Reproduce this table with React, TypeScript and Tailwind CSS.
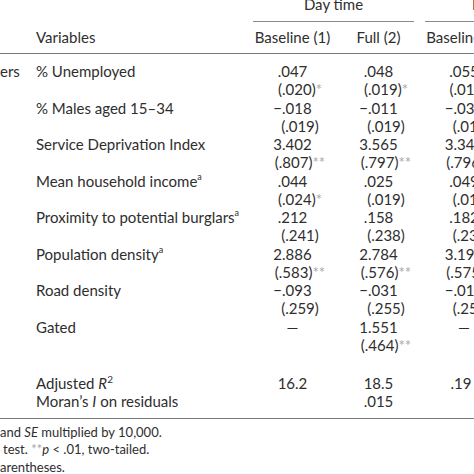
import React from "react";

type Cell = { c: string; se?: string; st?: string };
type Row = { label: React.ReactNode; a: Cell; b: Cell; cc: Cell; left?: string };

const rows: Row[] = [
  { left: "ers", label: "% Unemployed", a: { c: ".047", se: "(.020)", st: "*" }, b: { c: ".048", se: "(.019)", st: "*" }, cc: { c: ".055", se: "(.019)", st: "*" } },
  { label: "% Males aged 15–34", a: { c: "−.018", se: "(.019)" }, b: { c: "−.011", se: "(.019)" }, cc: { c: "−.036", se: "(.019)" } },
  { label: "Service Deprivation Index", a: { c: "3.402", se: "(.807)", st: "**" }, b: { c: "3.565", se: "(.797)", st: "**" }, cc: { c: "3.346", se: "(.796)", st: "**" } },
  { label: <>Mean household income<sup className="text-[9px] top-[-7px]">a</sup></>, a: { c: ".044", se: "(.024)", st: "*" }, b: { c: ".025", se: "(.019)" }, cc: { c: ".049", se: "(.019)" } },
  { label: <>Proximity to potential burglars<sup className="text-[9px] top-[-7px]">a</sup></>, a: { c: ".212", se: "(.241)" }, b: { c: ".158", se: "(.238)" }, cc: { c: ".182", se: "(.237)" } },
  { label: <>Population density<sup className="text-[9px] top-[-7px]">a</sup></>, a: { c: "2.886", se: "(.583)", st: "**" }, b: { c: "2.784", se: "(.576)", st: "**" }, cc: { c: "3.190", se: "(.575)", st: "**" } },
  { label: "Road density", a: { c: "−.093", se: "(.259)" }, b: { c: "−.031", se: "(.255)" }, cc: { c: "−.011", se: "(.257)" } },
  { label: "Gated", a: { c: "—" }, b: { c: "1.551", se: "(.464)", st: "**" }, cc: { c: "—" } },
];

function Num({ cell }: { cell: Cell }) {
  return (
    <div className="flex flex-col">
      <div className="text-center h-[18.25px]">{cell.c}</div>
      <div className="text-center h-[18.25px] pl-[15px]">
        {cell.se}
        {cell.st && <span className="text-[#a8a8a8]">{cell.st}</span>}
      </div>
    </div>
  );
}

export default function App() {
  return (
    <div className="w-[474px] h-[474px] overflow-hidden bg-white text-[#2e2e2e]" style={{ fontFamily: "Lato, 'Open Sans', sans-serif" }}>
      <div className="w-[506px] text-[15px] leading-[18.25px]">
        {/* group header */}
        <div className="grid grid-cols-[36px_214px_172px_84px]">
          <div />
          <div />
          <div className="ml-[3px] mr-[8px] border-b border-[#8a8a8a] pb-[8px] text-center">
            <div className="-mt-[5px] leading-[18px]">Day time</div>
          </div>
          <div className="ml-[3px] border-b border-[#8a8a8a] pb-[8px]">
            <div className="-mt-[5px] leading-[18px] pl-[47px] whitespace-nowrap">Night time</div>
          </div>
        </div>
        {/* column header */}
        <div className="grid grid-cols-[36px_214px_85px_87px_84px] border-b-[1.5px] border-[#7a7a7a] pt-[6px] pb-[7px] leading-[18px]">
          <div />
          <div>Variables</div>
          <div className="text-center">Baseline (1)</div>
          <div className="text-center">Full (2)</div>
          <div className="text-center whitespace-nowrap">Baseline (3)</div>
        </div>
        {/* body */}
        <div className="pt-[8px]">
          {rows.map((r, i) => (
            <div key={i} className="grid grid-cols-[36px_214px_85px_87px_84px]">
              <div className="whitespace-nowrap">{r.left ?? ""}</div>
              <div className="whitespace-nowrap">{r.label}</div>
              <Num cell={r.a} />
              <Num cell={r.b} />
              <Num cell={r.cc} />
            </div>
          ))}
          <div className="grid grid-cols-[36px_214px_85px_87px_84px] pt-[20px] pb-[7px] border-b-[1.5px] border-[#7a7a7a]">
            <div />
            <div className="flex flex-col whitespace-nowrap">
              <div className="h-[18.25px]">Adjusted <i>R</i><sup className="text-[10px] top-[-6px]">2</sup></div>
              <div className="h-[18.25px]">Moran’s <i>I</i> on residuals</div>
            </div>
            <div className="flex flex-col">
              <div className="text-center h-[18.25px]">16.2</div>
              <div className="h-[18.25px]" />
            </div>
            <div className="flex flex-col">
              <div className="text-center h-[18.25px]">18.5</div>
              <div className="text-center h-[18.25px]">.015</div>
            </div>
            <div className="flex flex-col">
              <div className="text-center h-[18.25px] pr-[6px]">.19</div>
              <div className="h-[18.25px]" />
            </div>
          </div>
        </div>
        {/* footnotes */}
        <div className="pt-[5px] text-[13px] leading-[17.5px] whitespace-nowrap">
          <div>and <i>SE</i> multiplied by 10,000.</div>
          <div className="pl-[3px]">test. <span className="text-[#a8a8a8]">**</span><i>p</i> &lt; .01, two-tailed.</div>
          <div>arentheses.</div>
        </div>
      </div>
    </div>
  );
}
